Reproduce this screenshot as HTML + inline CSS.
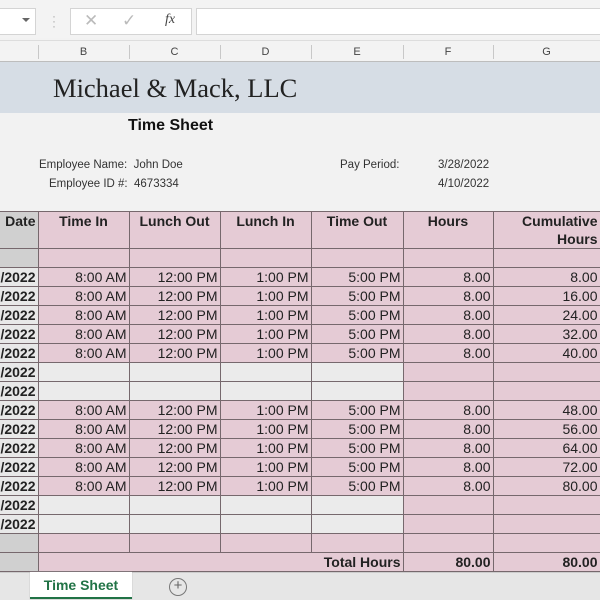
<!DOCTYPE html>
<html><head><meta charset="utf-8"><style>
*{margin:0;padding:0;box-sizing:border-box}
body{width:600px;height:600px;overflow:hidden;background:#f2f2f2;font-family:"Liberation Sans",Arial,sans-serif;position:relative}
.abs{position:absolute}
table{position:absolute;left:0;top:211px;border-collapse:collapse;table-layout:fixed;width:610px}
td{border:1px solid #76686d;height:19px;font-size:14px;text-align:right;padding:0 2px 0 0;color:#222;background:#e5cbd5;line-height:17px;white-space:nowrap;overflow:hidden}
td.a{background:#e8e8e8;font-weight:bold;border-left:none}
td.ad{background:#d0d0d0;border-left:none}
td.g{background:#ebebeb}
tr.h td{height:37px;vertical-align:top;text-align:center;font-weight:bold;padding:0;line-height:18px}
td.b{font-weight:bold}
.s{font-size:11.5px;color:#333}
</style></head><body>
<div class="abs" style="left:0;top:0;width:600px;height:38px;background:#f3f3f3"></div>
<div class="abs" style="left:0;top:8px;width:36px;height:27px;background:#fff;border:1px solid #d4d4d4;border-left:none"></div>
<div class="abs" style="left:22px;top:18px;width:0;height:0;border-left:4px solid transparent;border-right:4px solid transparent;border-top:4px solid #666"></div>
<div class="abs" style="left:52px;top:14px;color:#aaa;font-size:12px;line-height:5px">·<br>·<br>·</div>
<div class="abs" style="left:70px;top:8px;width:122px;height:27px;background:#fff;border:1px solid #d4d4d4"></div>
<div class="abs" style="left:84px;top:11px;color:#bbb;font-size:17px">✕</div>
<div class="abs" style="left:122px;top:11px;color:#bbb;font-size:17px">✓</div>
<div class="abs" style="left:165px;top:12px;color:#444;font-size:14px;font-family:'Liberation Serif',serif;font-style:italic">fx</div>
<div class="abs" style="left:196px;top:8px;width:410px;height:27px;background:#fff;border:1px solid #d4d4d4"></div>
<div class="abs" style="left:0;top:40px;width:600px;height:22px;background:#f3f3f3;border-top:1px solid #ddd;border-bottom:1px solid #bdbdbd;font-size:11px;color:#444">
<div class="abs" style="left:38px;top:4px;width:1px;height:14px;background:#c8c8c8"></div>
<div class="abs" style="left:38px;top:5px;width:91px;text-align:center">B</div>
<div class="abs" style="left:129px;top:4px;width:1px;height:14px;background:#c8c8c8"></div>
<div class="abs" style="left:129px;top:5px;width:91px;text-align:center">C</div>
<div class="abs" style="left:220px;top:4px;width:1px;height:14px;background:#c8c8c8"></div>
<div class="abs" style="left:220px;top:5px;width:91px;text-align:center">D</div>
<div class="abs" style="left:311px;top:4px;width:1px;height:14px;background:#c8c8c8"></div>
<div class="abs" style="left:311px;top:5px;width:92px;text-align:center">E</div>
<div class="abs" style="left:403px;top:4px;width:1px;height:14px;background:#c8c8c8"></div>
<div class="abs" style="left:403px;top:5px;width:90px;text-align:center">F</div>
<div class="abs" style="left:493px;top:4px;width:1px;height:14px;background:#c8c8c8"></div>
<div class="abs" style="left:493px;top:5px;width:107px;text-align:center">G</div>
</div>
<div class="abs" style="left:0;top:62px;width:600px;height:51px;background:#d6dde5"></div>
<div class="abs" style="left:53px;top:73px;font-family:'Liberation Serif',serif;font-size:26.5px;color:#222">Michael &amp; Mack, LLC</div>
<div class="abs" style="left:128px;top:117px;font-size:16px;font-weight:bold;color:#111">Time Sheet</div>
<div class="abs s" style="left:39px;top:159px">Employee Name:&nbsp; John Doe</div>
<div class="abs s" style="left:49px;top:178px">Employee ID #:&nbsp; 4673334</div>
<div class="abs s" style="left:340px;top:159px">Pay Period:</div>
<div class="abs s" style="left:438px;top:159px">3/28/2022</div>
<div class="abs s" style="left:438px;top:178px">4/10/2022</div>
<table>
<colgroup><col style="width:38px"><col style="width:91px"><col style="width:91px"><col style="width:91px"><col style="width:92px"><col style="width:90px"><col style="width:117px"></colgroup>
<tr class="h"><td class="ad" style="text-align:right;padding-right:2px">Date</td><td>Time In</td><td>Lunch Out</td><td>Lunch In</td><td>Time Out</td><td>Hours</td><td style="text-align:right;padding-right:12px">Cumulative<br>Hours</td></tr>
<tr><td class="ad"></td><td></td><td></td><td></td><td></td><td></td><td></td></tr>
<tr><td class="a">/2022</td><td>8:00 AM</td><td>12:00 PM</td><td>1:00 PM</td><td>5:00 PM</td><td>8.00</td><td style="padding-right:12px">8.00</td></tr>
<tr><td class="a">/2022</td><td>8:00 AM</td><td>12:00 PM</td><td>1:00 PM</td><td>5:00 PM</td><td>8.00</td><td style="padding-right:12px">16.00</td></tr>
<tr><td class="a">/2022</td><td>8:00 AM</td><td>12:00 PM</td><td>1:00 PM</td><td>5:00 PM</td><td>8.00</td><td style="padding-right:12px">24.00</td></tr>
<tr><td class="a">/2022</td><td>8:00 AM</td><td>12:00 PM</td><td>1:00 PM</td><td>5:00 PM</td><td>8.00</td><td style="padding-right:12px">32.00</td></tr>
<tr><td class="a">/2022</td><td>8:00 AM</td><td>12:00 PM</td><td>1:00 PM</td><td>5:00 PM</td><td>8.00</td><td style="padding-right:12px">40.00</td></tr>
<tr><td class="a">/2022</td><td class="g"></td><td class="g"></td><td class="g"></td><td class="g"></td><td></td><td></td></tr>
<tr><td class="a">/2022</td><td class="g"></td><td class="g"></td><td class="g"></td><td class="g"></td><td></td><td></td></tr>
<tr><td class="a">/2022</td><td>8:00 AM</td><td>12:00 PM</td><td>1:00 PM</td><td>5:00 PM</td><td>8.00</td><td style="padding-right:12px">48.00</td></tr>
<tr><td class="a">/2022</td><td>8:00 AM</td><td>12:00 PM</td><td>1:00 PM</td><td>5:00 PM</td><td>8.00</td><td style="padding-right:12px">56.00</td></tr>
<tr><td class="a">/2022</td><td>8:00 AM</td><td>12:00 PM</td><td>1:00 PM</td><td>5:00 PM</td><td>8.00</td><td style="padding-right:12px">64.00</td></tr>
<tr><td class="a">/2022</td><td>8:00 AM</td><td>12:00 PM</td><td>1:00 PM</td><td>5:00 PM</td><td>8.00</td><td style="padding-right:12px">72.00</td></tr>
<tr><td class="a">/2022</td><td>8:00 AM</td><td>12:00 PM</td><td>1:00 PM</td><td>5:00 PM</td><td>8.00</td><td style="padding-right:12px">80.00</td></tr>
<tr><td class="a">/2022</td><td class="g"></td><td class="g"></td><td class="g"></td><td class="g"></td><td></td><td></td></tr>
<tr><td class="a">/2022</td><td class="g"></td><td class="g"></td><td class="g"></td><td class="g"></td><td></td><td></td></tr>
<tr><td class="ad"></td><td></td><td></td><td></td><td></td><td></td><td></td></tr>
<tr><td class="ad"></td><td colspan="4" class="b">Total Hours</td><td class="b">80.00</td><td class="b" style="padding-right:12px">80.00</td></tr>
</table>
<div class="abs" style="left:0;top:572px;width:600px;height:28px;background:#e6e6e6;border-top:1px solid #ccc"></div>
<div class="abs" style="left:30px;top:572px;width:102px;height:27px;background:#fff;border-bottom:2px solid #217346;box-shadow:0 0 1px #aaa;color:#217346;font-weight:bold;font-size:14px;text-align:center;line-height:26px">Time Sheet</div>
<div class="abs" style="left:169px;top:578px;width:18px;height:18px;border:1.5px solid #777;border-radius:50%;color:#666;font-size:15px;line-height:14px;text-align:center">+</div>
</body></html>
